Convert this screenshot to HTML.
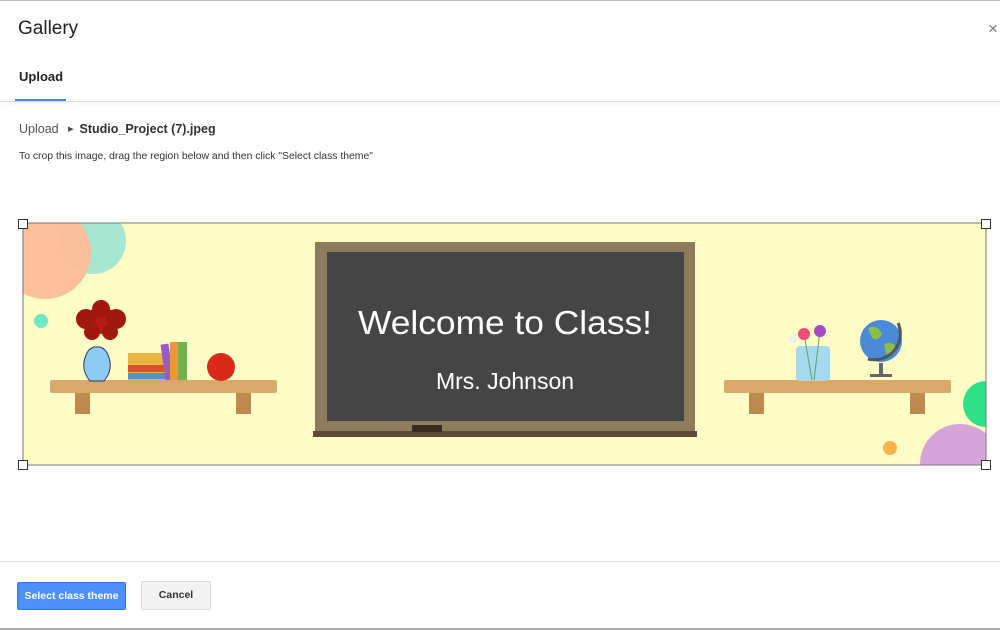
<!DOCTYPE html>
<html><head><style>
body{margin:0;width:1000px;height:629px;background:#fff;font-family:"Liberation Sans",Arial,sans-serif;position:relative;overflow:hidden;border-top:1px solid #bbb;box-sizing:border-box}
.a{position:absolute}
</style></head><body>
<div class="a" style="left:18px;top:17px;font-size:19px;color:#222">Gallery</div>
<div class="a" style="left:988px;top:18px;font-size:17px;color:#777">×</div>
<div class="a" style="left:19px;top:68px;font-size:13px;font-weight:bold;color:#222">Upload</div>
<div class="a" style="left:15px;top:98px;width:51px;height:2px;background:#4a86e8"></div>
<div class="a" style="left:0;top:100px;width:1000px;height:1px;background:#ddd;box-shadow:0 2px 3px rgba(0,0,0,.12)"></div>
<div class="a" style="left:19px;top:121px;font-size:12.5px;color:#555">Upload <span style="font-size:7px;color:#444;margin:0 6px 0 6px;position:relative;top:-2px">▶</span><b style="color:#333">Studio_Project (7).jpeg</b></div>
<div class="a" style="left:19px;top:150px;font-size:10.4px;color:#333">To crop this image, drag the region below and then click "Select class theme"</div>
<svg class="a" style="left:0;top:215px" width="1000" height="256">
<defs><clipPath id="c"><rect x="23" y="7" width="963" height="242"/></clipPath></defs>
<g clip-path="url(#c)">
<rect x="23" y="7" width="963" height="242" fill="#fffdc6"/>
<circle cx="93" cy="25" r="33" fill="#a8e6d2"/>
<circle cx="45" cy="37" r="46" fill="#fdbd9a" opacity=".95"/>
<circle cx="41" cy="105" r="7" fill="#6ee8c5"/>
<circle cx="986" cy="188" r="23" fill="#2ee08a"/>
<circle cx="960" cy="248" r="40" fill="#d5a4d8"/>
<circle cx="890" cy="232" r="7" fill="#fbb44a"/>
<rect x="50" y="164" width="227" height="13" rx="2" fill="#d9a96b"/>
<rect x="75" y="177" width="15" height="21" fill="#bf8a4f"/><rect x="236" y="177" width="15" height="21" fill="#bf8a4f"/>
<path d="M90 165 q-10 -12 -4 -26 q2 -6 8 -8 h6 q6 2 8 8 q6 14 -4 26z" fill="#8fcaf0" stroke="#336" stroke-width="1"/>
<circle cx="101" cy="104" r="14" fill="#b51d14"/><circle cx="86" cy="103" r="10" fill="#a01810"/><circle cx="116" cy="103" r="10" fill="#a01810"/><circle cx="101" cy="93" r="9" fill="#a01810"/><circle cx="92" cy="116" r="8" fill="#a01810"/><circle cx="110" cy="116" r="8" fill="#a01810"/>
<rect x="128" y="137" width="40" height="27" fill="#e8b640"/><rect x="128" y="149" width="40" height="7" fill="#d9502a"/><rect x="128" y="157" width="40" height="6" fill="#5a8ec0"/>
<rect x="163" y="128" width="8" height="36" fill="#9a5ac8" transform="rotate(-8 167 146)"/><rect x="170" y="126" width="8" height="38" fill="#ef9440"/><rect x="178" y="126" width="9" height="38" fill="#6fb44a"/>
<circle cx="221" cy="151" r="14" fill="#d9291a"/>
<rect x="315" y="26" width="380" height="191" fill="#8e7a5c"/>
<rect x="327" y="36" width="357" height="169" fill="#454545"/>
<rect x="313" y="215" width="384" height="6" fill="#5b4a36"/>
<rect x="412" y="209" width="30" height="7" fill="#3a2c20"/>
<text x="505" y="118" font-family="Liberation Sans,sans-serif" font-size="33" fill="#fff" text-anchor="middle" textLength="294" lengthAdjust="spacingAndGlyphs">Welcome to Class!</text>
<text x="505" y="173" font-family="Liberation Sans,sans-serif" font-size="23" fill="#fff" text-anchor="middle">Mrs. Johnson</text>
<rect x="724" y="164" width="227" height="13" rx="2" fill="#d9a96b"/>
<rect x="749" y="177" width="15" height="21" fill="#bf8a4f"/><rect x="910" y="177" width="15" height="21" fill="#bf8a4f"/>
<rect x="796" y="130" width="34" height="35" rx="4" fill="#a6d8ee"/>
<path d="M804 118 l8 46 M820 115 l-6 49" stroke="#5aa06a" stroke-width="1"/>
<circle cx="804" cy="118" r="6" fill="#ef4a7a"/><circle cx="820" cy="115" r="6" fill="#a54ac6"/><circle cx="793" cy="123" r="4" fill="#eee"/>
<circle cx="881" cy="125" r="21" fill="#4a8ad8"/><path d="M868 112 q10 -4 14 6 q-4 8 -10 4z M884 128 q8 -4 12 4 q-4 8 -10 6z" fill="#8ac04a"/>
<path d="M898 107 a26 26 0 0 1 -30 36" stroke="#555" stroke-width="3" fill="none"/>
<rect x="879" y="147" width="4" height="12" fill="#666"/><rect x="870" y="158" width="22" height="3" fill="#666"/>
</g>
<rect x="23" y="7" width="963" height="242" fill="none" stroke="#777" stroke-width="1"/>
<g fill="#fff" stroke="#333" stroke-width="1">
<rect x="18.5" y="3.5" width="9" height="9"/><rect x="981.5" y="3.5" width="9" height="9"/><rect x="18.5" y="244.5" width="9" height="9"/><rect x="981.5" y="244.5" width="9" height="9"/>
</g>
</svg>
<div class="a" style="left:0;top:560px;width:1000px;height:1px;background:#e5e5e5"></div>
<div class="a" style="left:17px;top:581px;width:107px;height:26px;background:#4d90fe;border:1px solid #3079ed;border-radius:2px;color:#fff;font-size:10.5px;font-weight:bold;text-align:center;line-height:26px">Select class theme</div>
<div class="a" style="left:141px;top:580px;width:68px;height:27px;background:#f3f3f3;border:1px solid #ddd;border-radius:2px;color:#333;font-size:10.5px;font-weight:bold;text-align:center;line-height:27px">Cancel</div>
<div class="a" style="left:0;top:627px;width:1000px;height:2px;background:#aaa"></div>
</body></html>
